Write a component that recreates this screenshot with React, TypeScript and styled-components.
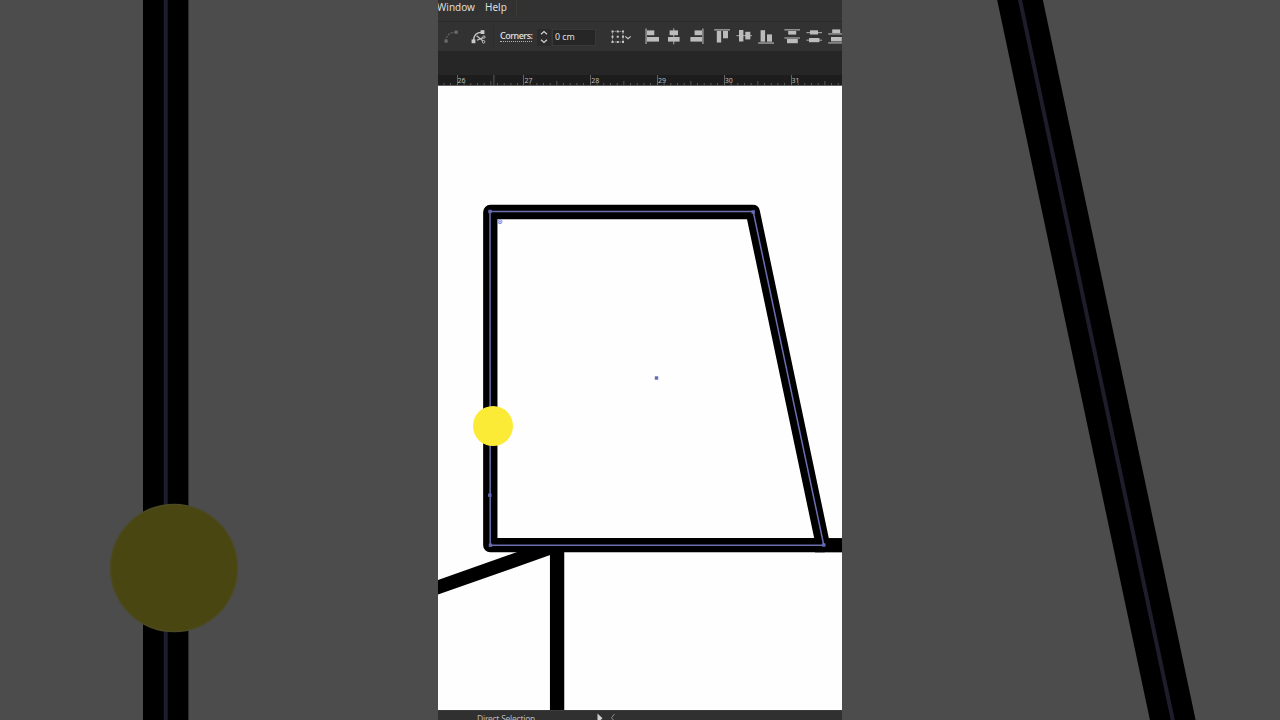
import React from 'react';
import styled, { createGlobalStyle } from 'styled-components';

const Global = createGlobalStyle`
  html, body { margin: 0; padding: 0; background: #4c4c4c; }
  svg { display: block; flex: none; }
`;

const Stage = styled.div`
  display: flex;
  width: 1280px;
  height: 720px;
  overflow: hidden;
  background: #4c4c4c;
  font-family: 'Noto Sans', 'Open Sans', sans-serif;
`;

const Side = styled.aside`
  width: 438px;
  height: 720px;
  flex: none;
  overflow: hidden;
`;

const Editor = styled.main`
  display: flex;
  flex-direction: column;
  width: 404px;
  height: 720px;
  flex: none;
  overflow: hidden;
  background: #323232;
`;

const MenuBar = styled.nav`
  display: flex;
  align-items: flex-start;
  height: 22px;
  box-sizing: border-box;
  border-bottom: 1px solid #2a2a2a;
  background: #323232;
`;

const MenuItem = styled.span<{ $gap: number; $width: number }>`
  margin-left: ${(p) => p.$gap}px;
  width: ${(p) => p.$width}px;
  flex: none;
  font-size: 10px;
  line-height: 15px;
  color: #dedede;
  white-space: nowrap;
`;

const MenuDivider = styled.i`
  width: 1px;
  height: 17px;
  margin-left: 8px;
  background: #3c3a35;
`;

const Toolbar = styled.div`
  display: flex;
  align-items: center;
  height: 29px;
  padding-left: 4px;
  padding-top: 1px;
  box-sizing: border-box;
  background: #323232;
  overflow: hidden;
`;

const Divider = styled.i<{ $left: number; $right: number }>`
  width: 1px;
  height: 26px;
  flex: none;
  margin: 0 ${(p) => p.$right}px 0 ${(p) => p.$left}px;
  background: #2d2d2d;
`;

const CornersLabel = styled.span`
  width: 32px;
  flex: none;
  font-size: 9px;
  font-weight: 500;
  letter-spacing: -0.5px;
  line-height: 8px;
  height: 9px;
  white-space: nowrap;
  color: #e2e2e2;
  border-bottom: 1px dotted #b4b4b4;
`;

const Stepper = styled.div`
  display: flex;
  align-items: center;
  justify-content: center;
  width: 14px;
  height: 17px;
  margin-left: 5px;
  flex: none;
  background: #2b2b2b;
`;

const Field = styled.div`
  width: 44px;
  height: 17px;
  flex: none;
  margin-left: 1px;
  padding-left: 2px;
  box-sizing: border-box;
  border: 1px solid #383838;
  background: #262626;
  color: #e0e0e0;
  font-size: 8.8px;
  line-height: 15px;
  white-space: nowrap;
`;

const IconGroup = styled.div<{ $gap: number }>`
  display: flex;
  flex: none;
  margin-left: ${(p) => p.$gap}px;
`;

const TabBar = styled.div`
  height: 24px;
  background: #262626;
`;

const Ruler = styled.div`
  display: flex;
  height: 11px;
  overflow: hidden;
  background: #1d1d1d;
`;

const RulerUnit = styled.div`
  display: grid;
  flex: none;
  width: 66.8px;
  height: 11px;
  > * { grid-area: 1 / 1; }
  &:first-child { margin-left: -48.2px; }
`;

const RulerLabel = styled.span`
  padding-left: 1px;
  font-size: 7px;
  line-height: 11px;
  height: 11px;
  color: #bcbcbc;
`;

const Canvas = styled.div`
  height: 624px;
  flex: none;
  overflow: hidden;
  background: #fefefe;
`;

const StatusBar = styled.footer`
  display: flex;
  height: 10px;
  box-sizing: border-box;
  border-top: 1px solid #3c3c3c;
  overflow: hidden;
  background: #303030;
`;

const StatusText = styled.span`
  margin-left: 39px;
  width: 120px;
  margin-top: 2px;
  flex: none;
  font-size: 8.5px;
  letter-spacing: -0.25px;
  line-height: 11px;
  white-space: nowrap;
  color: #b9b9b9;
`;

type Rect = [number, number, number, number];

function AlignIcon({ bars, lines }: { bars: Rect[]; lines: Rect[] }) {
  return (
    <svg width="22" height="20" viewBox="0 0 22 20">
      {lines.map(([x, y, w, h], i) => (
        <rect key={'l' + i} x={x} y={y} width={w} height={h} fill="#9a9a9a" />
      ))}
      {bars.map(([x, y, w, h], i) => (
        <rect key={'b' + i} x={x} y={y} width={w} height={h} fill="#bcbcbc" />
      ))}
    </svg>
  );
}

const horizontal: { bars: Rect[]; lines: Rect[] }[] = [
  { bars: [[5, 3.4, 7.3, 4.8], [5, 10, 12, 4.6]], lines: [[3.4, 1.5, 1.4, 15.5]] },
  { bars: [[5.6, 3.4, 8.4, 4.8], [4, 10, 11.6, 4.6]], lines: [[9.1, 1.3, 1.2, 16]] },
  { bars: [[8.6, 3.4, 7.4, 4.8], [4.4, 10, 11.6, 4.6]], lines: [[16.2, 1.5, 1.4, 15.5]] },
];
const vertical: { bars: Rect[]; lines: Rect[] }[] = [
  { bars: [[5.8, 4, 4.4, 11.5], [12, 4, 5, 7.3]], lines: [[3.2, 2.1, 15.8, 1.5]] },
  { bars: [[6, 3, 4.4, 11.5], [12.3, 4.8, 5, 7.6]], lines: [[3.5, 8, 15.4, 1.2]] },
  { bars: [[5.6, 3.2, 4.5, 11.5], [12, 7.4, 5, 7.3]], lines: [[3.2, 15.3, 15.8, 1.5]] },
];
const distribute: { bars: Rect[]; lines: Rect[] }[] = [
  { bars: [[7.2, 4, 8, 3.6], [6, 12, 10.8, 4.2]], lines: [[3.4, 2.1, 15.6, 1.4], [3.4, 10.3, 15.6, 1.4]] },
  { bars: [[7, 3.3, 8, 4.2], [6, 11, 10.4, 4.2]], lines: [[3.4, 5, 15.6, 1.2], [3.4, 12.6, 15.6, 1.2]] },
  { bars: [[7.2, 2.4, 8, 3.6], [6, 10, 10.8, 4.4]], lines: [[3.2, 6.2, 15.6, 1.4], [3.2, 15.2, 15.6, 1.4]] },
];

const AlignSet = ({ icons, gap }: { icons: typeof horizontal; gap: number }) => (
  <IconGroup $gap={gap}>
    {icons.map((icon, i) => <AlignIcon key={i} {...icon} />)}
  </IconGroup>
);

const ArcHandle = () => (
  <svg width="18" height="18" viewBox="0 0 18 18" fill="none" stroke="#646464">
    <path d="M4 13C4 7 8 4.5 14 4" strokeWidth="1.2" strokeDasharray="2 1.2" />
    <rect x="2.5" y="11.5" width="3.2" height="3.2" fill="#6a6a6a" stroke="none" />
    <rect x="12.6" y="2.6" width="3.2" height="3.2" fill="#6a6a6a" stroke="none" />
  </svg>
);

const CutPath = () => (
  <svg width="18" height="18" viewBox="0 0 18 18" fill="none" stroke="#c6c6c6">
    <path d="M4.5 13C4.5 7.5 8 4.4 13 4.2" strokeWidth="1.3" />
    <rect x="2.6" y="11.4" width="3.8" height="3.8" fill="#cacaca" stroke="none" />
    <rect x="11.6" y="2.2" width="3.8" height="3.8" fill="#cacaca" stroke="none" />
    <path d="M7.6 7.8l6.2 5M8 12.2l6-2.6" strokeWidth="1.2" />
    <circle cx="14.9" cy="9.1" r="1.2" strokeWidth=".9" />
    <circle cx="14.6" cy="13.8" r="1.3" strokeWidth=".9" />
  </svg>
);

const SelectionGrid = () => (
  <svg width="22" height="18" viewBox="0 0 22 18">
    <rect x="2.5" y="3.5" width="10.5" height="10.5" fill="none" stroke="#8a8a8a" strokeDasharray="1.6 .7" />
    {[2.5, 7.75, 13].map((x) =>
      [3.5, 8.75, 14].map((y) => (
        <rect key={x + '-' + y} x={x - 1} y={y - 1} width="2" height="2" fill="#c6c6c6" />
      )),
    )}
    <path d="M15.3 8.3l2.7 2.4 2.7-2.4" fill="none" stroke="#cccccc" strokeWidth="1.1" />
  </svg>
);

const Ticks = ({ cursor }: { cursor: boolean }) => (
  <svg width="66.8" height="11" viewBox="0 0 66.8 11">
    <rect x="0" y="0" width="1" height="10.4" fill="#636363" />
    {[1, 2, 3, 4, 5, 6, 7, 8, 9].map((n) => (
      <rect key={n} x={n * 6.68} y={n === 5 ? 6 : 8} width=".9" height={n === 5 ? 4.4 : 2.4} fill="#5b5b5b" />
    ))}
    {cursor && <rect x="36.4" y="0" width="1" height="10.4" fill="#5a5a5a" />}
    <rect x="0" y="10.2" width="67" height=".8" fill="#777" />
  </svg>
);

const anchors = [[490, 211.5], [753.2, 212], [823.8, 545], [490.5, 545.2], [489.8, 495.2], [656.5, 378]];

export default function App() {
  return (
    <>
      <Global />
      <Stage>
        <Side>
          <svg width="438" height="720" viewBox="0 0 438 720">
            <path d="M165.7 0V720" stroke="#000" strokeWidth="45.4" />
            <path d="M165.7 0V720" stroke="#1c1d30" strokeWidth="4" />
            <circle cx="174" cy="568" r="64.3" fill="#4b4a23" />
            <circle cx="174" cy="568" r="62.8" fill="#4a4611" />
          </svg>
        </Side>
        <Editor>
          <MenuBar>
            <MenuItem $gap={-1} $width={39}>Window</MenuItem>
            <MenuItem $gap={9} $width={23}>Help</MenuItem>
            <MenuDivider />
          </MenuBar>
          <Toolbar>
            <ArcHandle />
            <IconGroup $gap={9}><CutPath /></IconGroup>
            <Divider $left={6} $right={6} />
            <CornersLabel>Corners:</CornersLabel>
            <Stepper>
              <svg width="8" height="14" viewBox="0 0 8 14" fill="none" stroke="#d2d2d2" strokeWidth="1.2">
                <path d="M1 4.3L4 1.5 7 4.3M1 9.7L4 12.5 7 9.7" />
              </svg>
            </Stepper>
            <Field>0 cm</Field>
            <IconGroup $gap={14}><SelectionGrid /></IconGroup>
            <AlignSet icons={horizontal} gap={10} />
            <AlignSet icons={vertical} gap={3} />
            <AlignSet icons={distribute} gap={4} />
          </Toolbar>
          <TabBar />
          <Ruler>
            {[25, 26, 27, 28, 29, 30, 31].map((n) => (
              <RulerUnit key={n}>
                <Ticks cursor={n === 26} />
                {n > 25 && <RulerLabel>{n}</RulerLabel>}
              </RulerUnit>
            ))}
          </Ruler>
          <Canvas>
            <svg width="404" height="624" viewBox="438 86 404 624" fill="none">
              <g stroke="#000" strokeWidth="14.3">
                <path d="M430 590.1L557 545.3" strokeWidth="13.8" />
                <path d="M557.1 545V711" />
                <path d="M815 545.2H842" />
                <path d="M490.3 212H752.8L823 545.2H490.3Z" strokeLinejoin="round" />
              </g>
              <path d="M490 211.5H753.2L823.8 545.2H490.2Z" stroke="#6b6fb0" strokeWidth="1.5" />
              <circle cx="500" cy="221.7" r="2" fill="#dce0ff" stroke="#8591d8" strokeWidth="1" />
              <circle cx="500" cy="221.7" r=".7" fill="#6673c7" />
              {anchors.map(([x, y]) => (
                <rect key={x + ',' + y} x={x - 1.7} y={y - 1.7} width="3.4" height="3.4" fill="#6669b8" />
              ))}
              <circle cx="493" cy="426" r="20" fill="#fceb36" />
            </svg>
          </Canvas>
          <StatusBar>
            <StatusText>Direct Selection</StatusText>
            <svg width="24" height="9" viewBox="597 711 24 9">
              <path d="M597.5 713.5l5 4.7-5 4.7Z" fill="#d0d0d0" />
              <path d="M614.5 714l-3 3.7 3 3.7" fill="none" stroke="#8d8d8d" />
            </svg>
          </StatusBar>
        </Editor>
        <Side>
          <svg width="438" height="720" viewBox="842 0 438 720">
            <path d="M1017.9 -10L1174.9 730" stroke="#000" strokeWidth="44.7" />
            <path d="M1017.9 -10L1174.9 730" stroke="#1d1d2c" strokeWidth="4" />
          </svg>
        </Side>
      </Stage>
    </>
  );
}
